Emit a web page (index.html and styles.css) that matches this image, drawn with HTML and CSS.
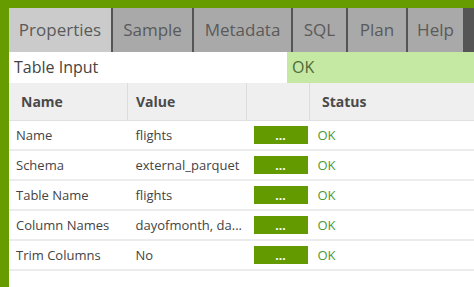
FILE: index.html
```html
<!DOCTYPE html>
<html lang="en">
<head>
  <meta charset="UTF-8" />
  <title>Table Input</title>
  <link rel="stylesheet" href="styles.css">
</head>
<body>
  <div class="frame">
    <div class="tabs">
      <div class="tab active">Properties</div>
      <div class="tab">Sample</div>
      <div class="tab">Metadata</div>
      <div class="tab">SQL</div>
      <div class="tab">Plan</div>
      <div class="tab">Help</div>
    </div>

    <div class="title-row">
      <div class="title">Table Input</div>
      <div class="state">OK</div>
    </div>

    <table class="props">
      <thead>
        <tr>
          <th class="c-name">Name</th>
          <th class="c-value">Value</th>
          <th class="c-btn"></th>
          <th>Status</th>
        </tr>
      </thead>
      <tbody>
        <tr>
          <td>Name</td>
          <td>flights</td>
          <td><button class="more">...</button></td>
          <td class="ok">OK</td>
        </tr>
        <tr>
          <td>Schema</td>
          <td>external_parquet</td>
          <td><button class="more">...</button></td>
          <td class="ok">OK</td>
        </tr>
        <tr>
          <td>Table Name</td>
          <td>flights</td>
          <td><button class="more">...</button></td>
          <td class="ok">OK</td>
        </tr>
        <tr>
          <td>Column Names</td>
          <td>dayofmonth, da...</td>
          <td><button class="more">...</button></td>
          <td class="ok">OK</td>
        </tr>
        <tr>
          <td>Trim Columns</td>
          <td>No</td>
          <td><button class="more">...</button></td>
          <td class="ok">OK</td>
        </tr>
      </tbody>
    </table>
  </div>
</body>
</html>
```

FILE: styles.css
```css
html, body {
  margin: 0;
  padding: 0;
  background: #fff;
}

body {
  font-family: "Open Sans", sans-serif;
  color: #444;
  overflow: hidden;
}

.frame {
  height: 279px;
  border-top: 8px solid #669c00;
  border-left: 9px solid #669c00;
}

.tabs {
  display: flex;
  height: 44px;
  background: #555;
}

.tab {
  width: 79px;
  border-right: 2px solid #555;
  background: #a9a9a9;
  color: #5a5a5a;
  font-size: 17px;
  line-height: 44px;
  text-align: center;
}

.tab.active {
  width: 102px;
  background: #cbcbcb;
}

.tab:nth-child(3) { width: 97px; }
.tab:nth-child(4) { width: 53px; }
.tab:nth-child(5) { width: 58px; }
.tab:nth-child(6) { width: 55px; }

.title-row {
  display: flex;
  height: 31px;
  font-size: 16px;
  line-height: 31px;
}

.title {
  width: 278px;
  padding-left: 5px;
  box-sizing: border-box;
  color: #444;
}

.state {
  flex: 1;
  padding-left: 5px;
  background: #c5e9a3;
  color: #4e6a3a;
}

.props {
  width: 100%;
  border-collapse: collapse;
  font-size: 13px;
}

.props th {
  height: 37px;
  padding: 0 0 0 12px;
  background: #efefef;
  border-right: 1px solid #dcdcdc;
  border-bottom: 1px solid #e0e0e0;
  text-align: left;
  font-size: 14px;
  font-weight: bold;
  color: #4a4a4a;
}

.props th:last-child {
  border-right: none;
}

.props .c-name { width: 106px; }
.props .c-value { width: 110px; padding-left: 8px; }
.props .c-btn { width: 62px; padding: 0; }

.props td {
  height: 28px;
  padding: 0 0 0 7px;
  border-bottom: 2px solid #ececec;
  white-space: nowrap;
}

.props td:nth-child(2) { padding-left: 8px; }

.props td:nth-child(3) {
  padding-left: 7px;
}

.props td.ok {
  padding-left: 8px;
  color: #4a9a34;
}

.more {
  display: flex;
  align-items: flex-end;
  justify-content: center;
  width: 54px;
  height: 18px;
  padding: 0 0 2px;
  border: none;
  background: #639a00;
  color: #fff;
  font-family: "Open Sans", sans-serif;
  font-size: 12px;
  font-weight: bold;
  line-height: 12px;
}
```
